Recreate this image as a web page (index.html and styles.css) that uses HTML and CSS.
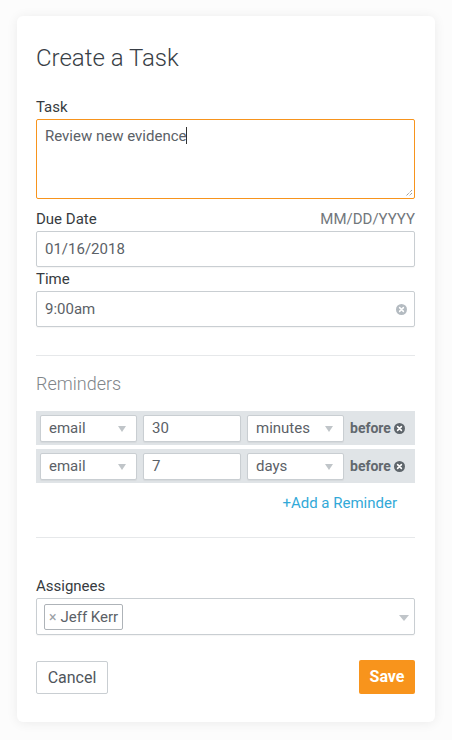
FILE: index.html
```html
<!DOCTYPE html>
<html lang="en">
<head>
<meta charset="utf-8">
<title>Create a Task</title>
<link rel="stylesheet" href="styles.css">
</head>
<body>
<div class="card">
  <h1 class="title">Create a Task</h1>

  <div class="label">Task</div>
  <div class="textarea">
    <span class="ta-text">Review new evidence</span><span class="caret"></span>
    <svg class="grip" width="8" height="8" viewBox="0 0 8 8"><path d="M7 1L1 7M7 4L4 7" stroke="#777" stroke-width="1" stroke-dasharray="1 1"/></svg>
  </div>

  <div class="label label-row gap-top"><span>Due Date</span><span class="hint">MM/DD/YYYY</span></div>
  <div class="input">01/16/2018</div>

  <div class="label gap-small">Time</div>
  <div class="input input-clear">
    <span>9:00am</span>
    <svg class="clear" width="11" height="11" viewBox="0 0 11 11"><circle cx="5.5" cy="5.5" r="5.5" fill="#b4bbc1"/><path d="M3.6 3.6L7.4 7.4M7.4 3.6L3.6 7.4" stroke="#fff" stroke-width="1.5" stroke-linecap="round"/></svg>
  </div>

  <hr class="divider divider-1">

  <div class="section-title">Reminders</div>

  <div class="reminders">
    <div class="reminder">
      <div class="ctrl select">email<span class="arrow"></span></div>
      <div class="ctrl">30</div>
      <div class="ctrl select">minutes<span class="arrow"></span></div>
      <span class="before">before</span>
      <svg class="remove" width="11" height="11" viewBox="0 0 11 11"><circle cx="5.5" cy="5.5" r="5.5" fill="#5f666c"/><path d="M3.6 3.6L7.4 7.4M7.4 3.6L3.6 7.4" stroke="#fff" stroke-width="1.6" stroke-linecap="round"/></svg>
    </div>
    <div class="reminder">
      <div class="ctrl select">email<span class="arrow"></span></div>
      <div class="ctrl">7</div>
      <div class="ctrl select">days<span class="arrow"></span></div>
      <span class="before">before</span>
      <svg class="remove" width="11" height="11" viewBox="0 0 11 11"><circle cx="5.5" cy="5.5" r="5.5" fill="#5f666c"/><path d="M3.6 3.6L7.4 7.4M7.4 3.6L3.6 7.4" stroke="#fff" stroke-width="1.6" stroke-linecap="round"/></svg>
    </div>
  </div>

  <div class="add-row"><a class="add-link">+Add a Reminder</a></div>

  <hr class="divider divider-2">

  <div class="label">Assignees</div>
  <div class="multi">
    <span class="tag"><span class="tag-x">×</span>Jeff Kerr</span>
    <span class="arrow arrow-lg"></span>
  </div>

  <div class="actions">
    <button class="btn btn-cancel">Cancel</button>
    <button class="btn btn-save">Save</button>
  </div>
</div>
</body>
</html>
```

FILE: styles.css
```css
* { box-sizing: border-box; }

html, body {
  margin: 0;
  padding: 0;
  background: #fcfcfc;
}

body {
  font-family: Roboto, "Liberation Sans", Arial, sans-serif;
  color: #363b40;
  padding: 16px 17px 18px 17px;
}

.card {
  width: 418px;
  background: #fff;
  border-radius: 6px;
  box-shadow: 0 1px 12px rgba(0, 0, 0, 0.07);
  padding: 28px 20px 28px 19px;
}

.title {
  margin: 0 0 25px 0;
  font-size: 24px;
  line-height: 28px;
  font-weight: 300;
  color: #383e45;
}

.label {
  font-size: 15px;
  line-height: 20px;
  color: #363b40;
  margin-bottom: 2px;
}

.label-row {
  display: flex;
  justify-content: space-between;
}

.gap-top { margin-top: 10px; }
.gap-small { margin-top: 2px; }

.hint { color: #72777c; }

.textarea {
  position: relative;
  height: 80px;
  border: 1px solid #f7941d;
  border-radius: 2px;
  padding: 6px 8px;
  font-size: 15px;
  line-height: 20px;
  color: #5b6167;
}

.caret {
  display: inline-block;
  width: 1px;
  height: 17px;
  background: #333;
  vertical-align: -3px;
}

.grip {
  position: absolute;
  right: 1px;
  bottom: 1px;
}

.input {
  height: 36px;
  border: 1px solid #c9ced2;
  border-radius: 2px;
  padding: 0 8px;
  font-size: 15px;
  line-height: 34px;
  color: #5b6167;
  box-shadow: 0 1px 1px rgba(0, 0, 0, 0.04);
}

.input-clear {
  display: flex;
  align-items: center;
  justify-content: space-between;
  padding-right: 7px;
}

.divider {
  border: 0;
  border-top: 1px solid #e6e8ea;
  margin: 0;
}

.divider-1 { margin-top: 28px; }

.section-title {
  margin-top: 16px;
  font-size: 18px;
  line-height: 24px;
  font-weight: 300;
  color: #808589;
}

.reminders {
  margin-top: 15px;
  display: flex;
  flex-direction: column;
  gap: 4px;
}

.reminder {
  height: 34px;
  background: #e0e4e7;
  display: flex;
  align-items: center;
  padding: 0 0 0 4px;
}

.ctrl {
  position: relative;
  width: 98px;
  height: 27px;
  margin-right: 6px;
  background: #fff;
  border: 1px solid #c9ced2;
  border-radius: 2px;
  padding: 0 8px;
  font-size: 15px;
  line-height: 25px;
  color: #5b6167;
  box-shadow: 0 1px 1px rgba(0, 0, 0, 0.05);
}

.ctrl.select { width: 97px; }

.arrow {
  position: absolute;
  right: 10px;
  top: 10px;
  width: 0;
  height: 0;
  border-left: 4px solid transparent;
  border-right: 4px solid transparent;
  border-top: 6px solid #c0c5c9;
}

.before {
  font-size: 14px;
  font-weight: 700;
  color: #62686e;
  line-height: 20px;
}

.remove {
  margin-left: 3px;
}

.add-row {
  margin-top: 10px;
  display: flex;
  justify-content: flex-end;
  padding-right: 18px;
}

.add-link {
  font-size: 15px;
  line-height: 20px;
  color: #32a9d8;
  cursor: pointer;
}

.divider-2 { margin-top: 24px; margin-bottom: 38px; }

.multi {
  position: relative;
  height: 37px;
  border: 1px solid #c9ced2;
  border-radius: 2px;
  padding: 5px 0 0 7px;
  box-shadow: 0 1px 1px rgba(0, 0, 0, 0.04);
}

.tag {
  display: inline-flex;
  align-items: center;
  height: 26px;
  padding: 0 4px 0 4px;
  border: 1px solid #aeb3b8;
  border-radius: 2px;
  font-size: 15px;
  color: #5b6167;
}

.tag-x {
  color: #9ba1a6;
  font-size: 14px;
  margin-right: 4px;
}

.arrow-lg {
  right: 5px;
  top: 16px;
  border-left-width: 5px;
  border-right-width: 5px;
  border-top-width: 6px;
}

.actions {
  margin-top: 25px;
  display: flex;
  justify-content: space-between;
  align-items: flex-end;
}

.btn {
  font-family: Roboto, "Liberation Sans", Arial, sans-serif;
  font-size: 16px;
  border-radius: 2px;
  cursor: pointer;
}

.btn-cancel {
  width: 72px;
  height: 33px;
  background: #fff;
  border: 1px solid #c9ced2;
  color: #50565c;
  padding: 0;
}

.btn-save {
  width: 56px;
  height: 34px;
  background: #f8941c;
  border: 0;
  color: #fff;
  font-weight: 700;
  padding: 0 0 2px 0;
}
```
